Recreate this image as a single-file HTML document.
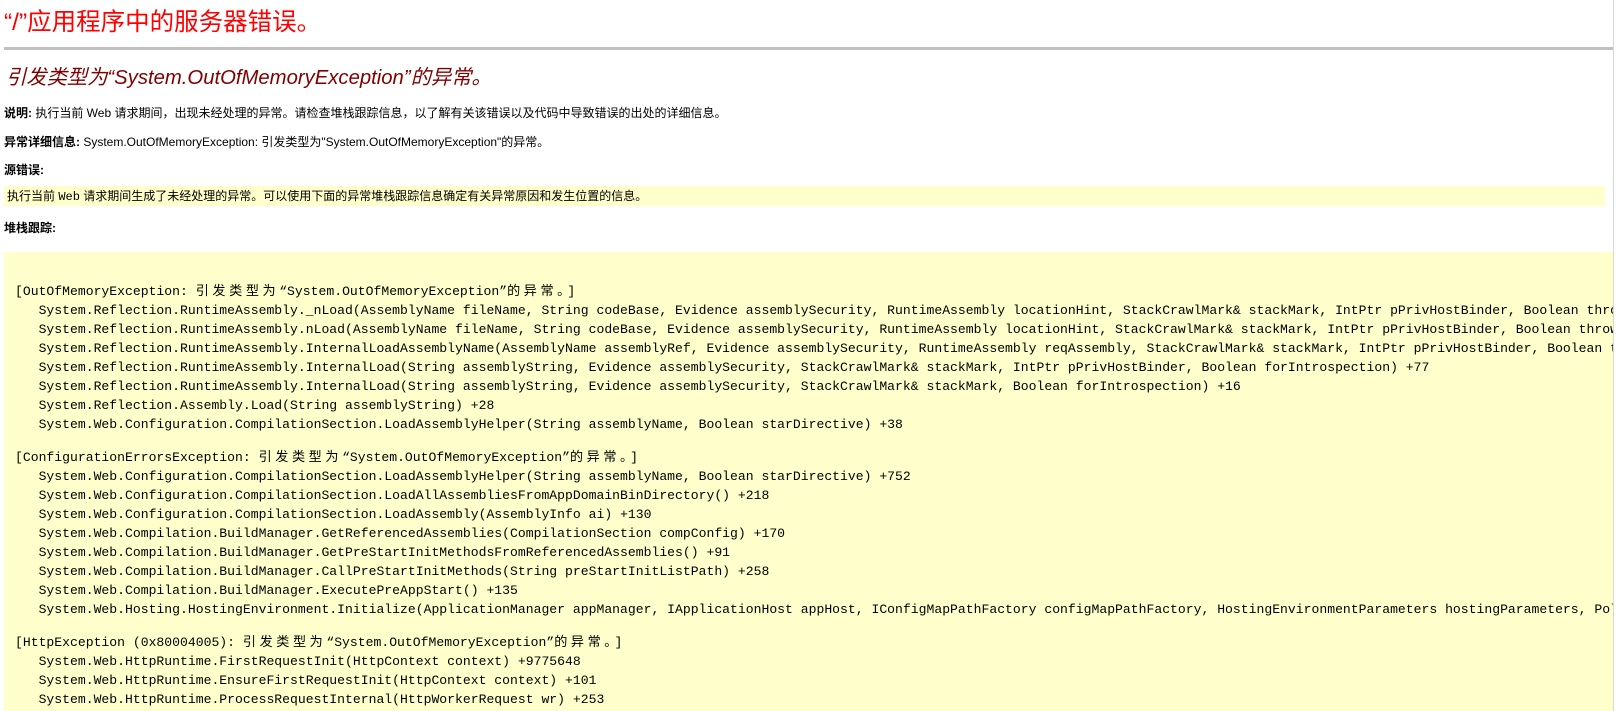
<!DOCTYPE html>
<html><head><meta charset="utf-8">
<style>
html,body{margin:0;padding:0;background:#fff;width:1617px;height:711px;overflow:hidden;position:relative}
.a{position:absolute;white-space:nowrap;font-family:"Liberation Sans","Noto Sans CJK SC",sans-serif}
.t{left:4px;top:8px;height:30px;line-height:30px;font-size:24.5px;color:#ff0000}
.hr{position:absolute;left:4px;top:47px;width:1609px;height:3px;background:#c0c0c0}
.h2{left:6px;top:65px;height:26px;line-height:26px;font-size:20.3px;color:#800000;font-style:italic}
.p{left:4px;height:16px;line-height:16px;font-size:12px;color:#000}
.p b{font-weight:bold}
.src{position:absolute;left:4px;top:186px;width:1601px;height:20px;background:#ffffcc;}
.src div{position:absolute;left:3px;top:0;line-height:20px;font-size:12px;white-space:nowrap;font-family:"Liberation Sans","Noto Sans CJK SC",sans-serif}
.m{font-family:"Liberation Mono",monospace;font-size:12px}
.stk{position:absolute;left:4px;top:252px;width:1609px;height:459px;background:#ffffcc;overflow:hidden}
.in{position:absolute;left:11px;top:30px;font-family:"Liberation Mono","Noto Sans CJK SC",monospace;font-size:13.1px;white-space:pre;color:#000}
.in div{height:19px;line-height:19px}
.in .g{margin-top:14px}
.c{letter-spacing:3.6px}
.edge{position:absolute;left:1613px;top:0;width:4px;height:711px;background:#fff;border-left:1px solid #d8d8d8}
</style></head><body>
<div class="a t">“/”应用程序中的服务器错误。</div>
<div class="hr"></div>
<div class="a h2">引发类型为“System.OutOfMemoryException”的异常。</div>
<div class="a p" style="top:105px"><b>说明:</b> 执行当前 Web 请求期间，出现未经处理的异常。请检查堆栈跟踪信息，以了解有关该错误以及代码中导致错误的出处的详细信息。</div>
<div class="a p" style="top:134px"><b>异常详细信息:</b> System.OutOfMemoryException: 引发类型为"System.OutOfMemoryException"的异常。</div>
<div class="a p" style="top:162px"><b>源错误:</b></div>
<div class="src"><div>执行当前 <span class="m">Web</span> 请求期间生成了未经处理的异常。可以使用下面的异常堆栈跟踪信息确定有关异常原因和发生位置的信息。</div></div>
<div class="a p" style="top:220px"><b>堆栈跟踪:</b></div>
<div class="stk"><div class="in"><div>[OutOfMemoryException: <span class="c">引发类型为</span>“System.OutOfMemoryException”<span class="c">的异常。</span>]</div><div>   System.Reflection.RuntimeAssembly._nLoad(AssemblyName fileName, String codeBase, Evidence assemblySecurity, RuntimeAssembly locationHint, StackCrawlMark&amp; stackMark, IntPtr pPrivHostBinder, Boolean throwOnFileNotFound, Boolean forIntrospection) +0</div><div>   System.Reflection.RuntimeAssembly.nLoad(AssemblyName fileName, String codeBase, Evidence assemblySecurity, RuntimeAssembly locationHint, StackCrawlMark&amp; stackMark, IntPtr pPrivHostBinder, Boolean throwOnFileNotFound) +34</div><div>   System.Reflection.RuntimeAssembly.InternalLoadAssemblyName(AssemblyName assemblyRef, Evidence assemblySecurity, RuntimeAssembly reqAssembly, StackCrawlMark&amp; stackMark, IntPtr pPrivHostBinder, Boolean throwOnFileNotFound) +152</div><div>   System.Reflection.RuntimeAssembly.InternalLoad(String assemblyString, Evidence assemblySecurity, StackCrawlMark&amp; stackMark, IntPtr pPrivHostBinder, Boolean forIntrospection) +77</div><div>   System.Reflection.RuntimeAssembly.InternalLoad(String assemblyString, Evidence assemblySecurity, StackCrawlMark&amp; stackMark, Boolean forIntrospection) +16</div><div>   System.Reflection.Assembly.Load(String assemblyString) +28</div><div>   System.Web.Configuration.CompilationSection.LoadAssemblyHelper(String assemblyName, Boolean starDirective) +38</div><div class="g">[ConfigurationErrorsException: <span class="c">引发类型为</span>“System.OutOfMemoryException”<span class="c">的异常。</span>]</div><div>   System.Web.Configuration.CompilationSection.LoadAssemblyHelper(String assemblyName, Boolean starDirective) +752</div><div>   System.Web.Configuration.CompilationSection.LoadAllAssembliesFromAppDomainBinDirectory() +218</div><div>   System.Web.Configuration.CompilationSection.LoadAssembly(AssemblyInfo ai) +130</div><div>   System.Web.Compilation.BuildManager.GetReferencedAssemblies(CompilationSection compConfig) +170</div><div>   System.Web.Compilation.BuildManager.GetPreStartInitMethodsFromReferencedAssemblies() +91</div><div>   System.Web.Compilation.BuildManager.CallPreStartInitMethods(String preStartInitListPath) +258</div><div>   System.Web.Compilation.BuildManager.ExecutePreAppStart() +135</div><div>   System.Web.Hosting.HostingEnvironment.Initialize(ApplicationManager appManager, IApplicationHost appHost, IConfigMapPathFactory configMapPathFactory, HostingEnvironmentParameters hostingParameters, PolicyLevel policyLevel) +838</div><div class="g">[HttpException (0x80004005): <span class="c">引发类型为</span>“System.OutOfMemoryException”<span class="c">的异常。</span>]</div><div>   System.Web.HttpRuntime.FirstRequestInit(HttpContext context) +9775648</div><div>   System.Web.HttpRuntime.EnsureFirstRequestInit(HttpContext context) +101</div><div>   System.Web.HttpRuntime.ProcessRequestInternal(HttpWorkerRequest wr) +253</div></div></div>
<div class="edge"></div>
</body></html>
